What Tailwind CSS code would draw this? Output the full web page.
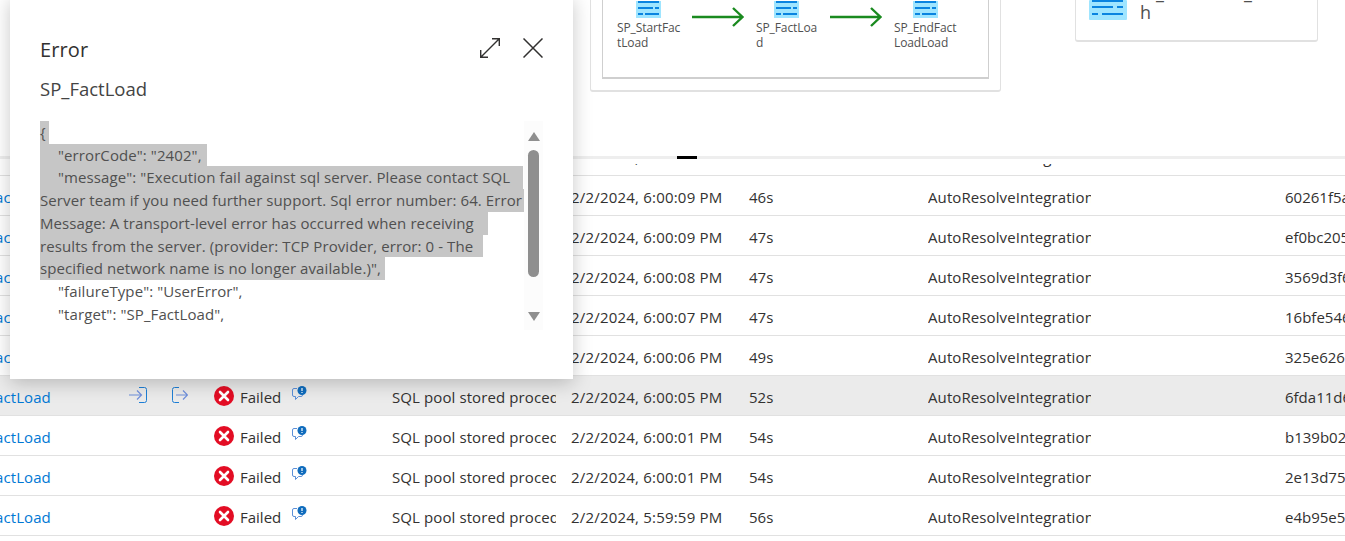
<!DOCTYPE html>
<html lang="en">
<head>
  <meta charset="UTF-8">
  <title>Pipeline run error</title>
  <script src="https://cdn.jsdelivr.net/npm/@tailwindcss/browser@4"></script>
</head>
<body class="bg-white text-[#323130] font-['Open_Sans','Noto_Sans',sans-serif] overflow-hidden">
  <div class="relative w-[1345px] h-[541px] overflow-hidden">

    <!-- Pipeline canvas -->
    <div class="h-[156px] flex items-start">
      <div class="ml-[590px] mt-[-20px] w-[411px] h-[112px] bg-white border border-[#e1e1e1] border-b-2 rounded-[3px] px-[11px] pt-[11px]">
        <div class="h-[87px] border border-[#cfcfcf] border-b-2 flex pl-[14px] pt-[8px]">
          <div class="w-[76px]">
            <svg class="ml-[19px] w-[25px] h-[17px]" viewBox="0 0 25 17"><rect width="25" height="17" fill="#9fe5ff"/><path d="M2 1h21M2 7h15M19 7h4M2 13h5M9 13h14" stroke="#0a84e0" stroke-width="2"/></svg>
            <p class="mt-[2px] text-[12px] leading-[15px] tracking-[-0.1px] text-[#505050] whitespace-nowrap">SP_StartFac<br>tLoad</p>
          </div>
          <svg class="ml-[-1px] mt-[6px] w-[54px] h-[20px]" viewBox="0 0 54 20"><path d="M0 10h50M41 1l9.500 9-9.500 9" fill="none" stroke="#1a8a1f" stroke-width="2.400"/></svg>
          <div class="ml-[10px] w-[76px]">
            <svg class="ml-[18px] w-[25px] h-[17px]" viewBox="0 0 25 17"><rect width="25" height="17" fill="#9fe5ff"/><path d="M2 1h21M2 7h15M19 7h4M2 13h5M9 13h14" stroke="#0a84e0" stroke-width="2"/></svg>
            <p class="mt-[2px] text-[12px] leading-[15px] tracking-[-0.1px] text-[#505050] whitespace-nowrap">SP_FactLoa<br>d</p>
          </div>
          <svg class="ml-[-2px] mt-[6px] w-[54px] h-[20px]" viewBox="0 0 54 20"><path d="M0 10h50M41 1l9.500 9-9.500 9" fill="none" stroke="#1a8a1f" stroke-width="2.400"/></svg>
          <div class="ml-[10px] w-[76px]">
            <svg class="ml-[19px] w-[25px] h-[17px]" viewBox="0 0 25 17"><rect width="25" height="17" fill="#9fe5ff"/><path d="M2 1h21M2 7h15M19 7h4M2 13h5M9 13h14" stroke="#0a84e0" stroke-width="2"/></svg>
            <p class="mt-[2px] text-[12px] leading-[15px] tracking-[-0.1px] text-[#505050] whitespace-nowrap">SP_EndFact<br>LoadLoad</p>
          </div>
        </div>
      </div>
      <div class="ml-[74px] mt-[-20px] w-[243px] h-[62px] bg-white border border-[#e1e1e1] border-b-2 rounded-[3px] flex pl-[13px] pt-[19px]">
        <svg class="w-[38px] h-[20px]" viewBox="0 0 38 20"><rect width="38" height="20" rx="1" fill="#9fe5ff"/><path d="M3 1h31M3 7h21M28 7h6M3 14h6M13 14h21" stroke="#0a84e0" stroke-width="2"/></svg>
        <p class="ml-[13px] text-[18px] leading-[24px] text-[#505050] whitespace-nowrap">h<span class="relative top-[-20px] ml-[5px]">_</span><span class="relative top-[-20px] ml-[80px]">_</span></p>
      </div>
    </div>

    <!-- Activity runs table -->
    <div class="relative h-[3px] bg-[#eeeeee]">
      <div class="absolute left-[677px] top-0 w-[20px] h-[3px] bg-black"></div>
    </div>
    <div id="rows"></div>

    <!-- Error dialog -->
    <div class="absolute left-[10px] top-[-4px] w-[563px] h-[383px] bg-white shadow-[0_4px_18px_rgba(0,0,0,0.22)] px-[30px]">
      <div class="flex items-start justify-between pt-[40px]">
        <h2 class="text-[20px] leading-[28px] text-[#323130] tracking-[0.1px]">Error</h2>
        <div class="flex gap-[23px] mt-[2px]">
          <svg class="w-[20px] h-[20px]" viewBox="0 0 20 20"><path d="M.5 19.500l19-19M12 .7h7.300V8M.7 12v7.300H8" fill="none" stroke="#323130" stroke-width="1.400"/></svg>
          <svg class="w-[20px] h-[20px]" viewBox="0 0 20 20"><path d="M.5.5l19 19M19.500.5l-19 19" fill="none" stroke="#323130" stroke-width="1.500"/></svg>
        </div>
      </div>
      <h3 class="mt-[12px] text-[18.500px] leading-[25px] text-[#444444]">SP_FactLoad</h3>
      <div class="mt-[20px] flex h-[209px]">
        <div class="w-[484px] text-[15px] leading-[22.700px] text-[#505050] tracking-[0.09px] whitespace-nowrap">
          <div class="w-[9px] bg-[#c6c6c6]">{</div>
          <div class="w-[167px] bg-[#c6c6c6] pl-[18px]">"errorCode": "2402",</div>
          <div class="w-[483px] bg-[#c6c6c6] pl-[18px]">"message": "Execution fail against sql server. Please contact SQL</div>
          <div class="w-[484px] bg-[#c6c6c6]">Server team if you need further support. Sql error number: 64. Error</div>
          <div class="w-[448px] bg-[#c6c6c6]">Message: A transport-level error has occurred when receiving</div>
          <div class="w-[443px] bg-[#c6c6c6]">results from the server. (provider: TCP Provider, error: 0 - The</div>
          <div class="w-[345px] bg-[#c6c6c6]">specified network name is no longer available.)",</div>
          <div class="pl-[18px]">"failureType": "UserError",</div>
          <div class="pl-[18px]">"target": "SP_FactLoad",</div>
        </div>
        <div class="w-[19px] bg-[#fcfcfc] flex flex-col items-center">
          <svg class="mt-[11px] w-[12px] h-[9px]" viewBox="0 0 12 9"><path d="M6 0l6 9H0z" fill="#8f8f8f"/></svg>
          <div class="mt-[9px] w-[11px] h-[127px] rounded-full bg-[#8f8f8f]"></div>
          <svg class="mt-[35px] w-[12px] h-[9px]" viewBox="0 0 12 9"><path d="M0 0h12L6 9z" fill="#8f8f8f"/></svg>
        </div>
      </div>
    </div>
  </div>

  <script>
    const runs = [
      ['6:00:09 PM', '46s', '60261f5a', false],
      ['6:00:09 PM', '47s', 'ef0bc205', false],
      ['6:00:08 PM', '47s', '3569d3f6', false],
      ['6:00:07 PM', '47s', '16bfe546', false],
      ['6:00:06 PM', '49s', '325e6261', false],
      ['6:00:05 PM', '52s', '6fda11d6', true],
      ['6:00:01 PM', '54s', 'b139b02a', false],
      ['6:00:01 PM', '54s', '2e13d75c', false],
      ['5:59:59 PM', '56s', 'e4b95e5d', false]
    ];

    const failedIcon = `<svg class="w-[20px] h-[20px] mt-[-2px] shrink-0" viewBox="0 0 20 20"><circle cx="10" cy="10" r="10" fill="#e30d24"/><path d="M6 6l8 8M14 6l-8 8" stroke="#fff" stroke-width="2.600" stroke-linecap="round"/></svg>`;
    const commentIcon = `<svg class="ml-[11px] mt-[-7px] w-[15px] h-[15px] shrink-0" viewBox="0 0 15 15"><path d="M5 2.500H2A1.500 1.500 0 0 0 .5 4v5A1.500 1.500 0 0 0 2 10.500h1.500v3l3-3H9A1.500 1.500 0 0 0 10.500 9" fill="none" stroke="#5b8fd8" stroke-width="1"/><circle cx="10" cy="4.500" r="4.500" fill="#0f6cbd"/><path d="M10 2v3M10 6v1" stroke="#fff" stroke-width="1.200"/></svg>`;
    const inIcon = `<svg class="w-[18px] h-[16px] mt-[-4px]" viewBox="0 0 18 16"><path d="M10 .5h5.500a2 2 0 0 1 2 2v11a2 2 0 0 1-2 2H10" fill="none" stroke="#1e7fd6"/><path d="M0 8h12M8 3.500L12.500 8 8 12.500" fill="none" stroke="#6f8fdc" stroke-width="1.200"/></svg>`;
    const outIcon = `<svg class="w-[16px] h-[16px] mt-[-4px]" viewBox="0 0 16 16"><path d="M7 .5H2.500a2 2 0 0 0-2 2v11a2 2 0 0 0 2 2H7" fill="none" stroke="#1e7fd6"/><path d="M4 8h11M11 3.500L15.500 8 11 12.500" fill="none" stroke="#6f8fdc" stroke-width="1.200"/></svg>`;

    function rowHtml(run) {
      const [time, duration, id, selected] = run;
      return `
        <div class="h-[40px] border-b border-[#e1e1e1] grid grid-cols-[129px_43px_42px_178px_179px_178px_179px_357px_60px] items-center text-[15px] leading-[20px] whitespace-nowrap pt-[2px] ${selected ? 'bg-[#ebebeb]' : 'bg-white'}">
          <div class="ml-[-37px] text-[#0078d4] tracking-[0.1px]">SP_FactLoad</div>
          <div>${selected ? inIcon : ''}</div>
          <div>${selected ? outIcon : ''}</div>
          <div class="flex items-center">${failedIcon}<span class="ml-[6px]">Failed</span>${commentIcon}</div>
          <div class="w-[164px] overflow-hidden tracking-[0.1px]">SQL pool stored procedure</div>
          <div class="tracking-[0.2px]">2/2/2024, ${time}</div>
          <div>${duration}</div>
          <div class="w-[163px] overflow-hidden tracking-[0.1px]">AutoResolveIntegrationRuntime</div>
          <div class="overflow-hidden">${id}</div>
        </div>`;
    }

    // the row above the first full one is mostly covered: only its descenders show below y=163
    document.getElementById('rows').innerHTML =
      `<div class="pt-[5px]"><div class="h-[12px] overflow-hidden flex items-end"><div class="w-full shrink-0">${rowHtml(['6:00:10 PM', '46s', '', false])}</div></div></div>` +
      runs.map(rowHtml).join('');
  </script>
</body>
</html>
